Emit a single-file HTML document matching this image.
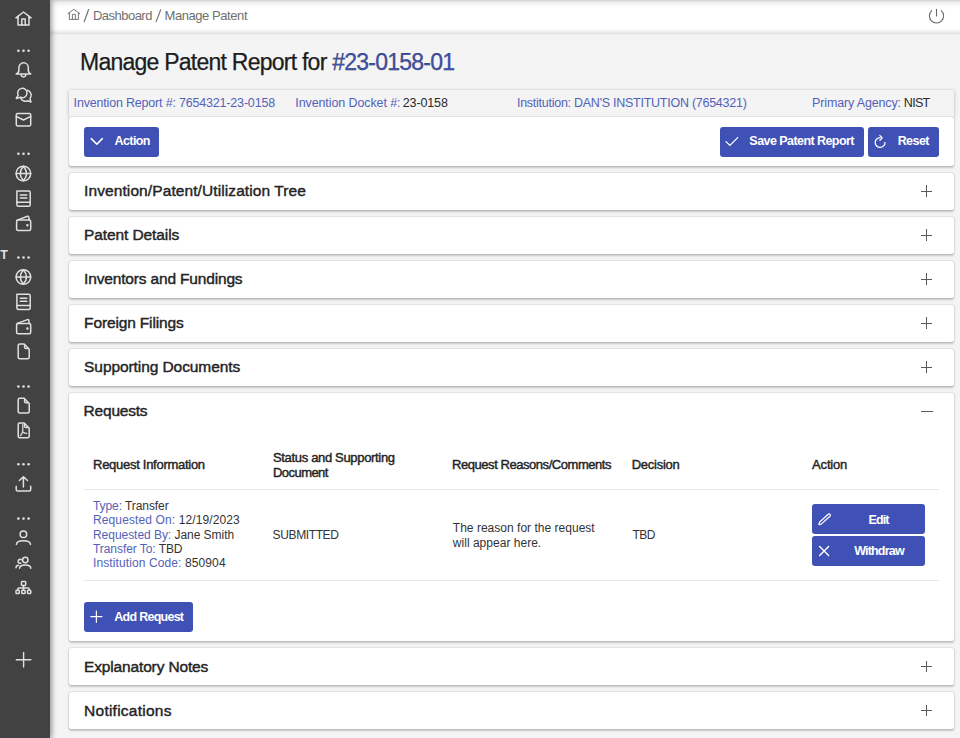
<!DOCTYPE html>
<html><head><meta charset="utf-8">
<style>
*{box-sizing:border-box;margin:0;padding:0}
html,body{width:960px;height:738px;overflow:hidden}
body{background:#f4f4f4;font-family:"Liberation Sans",sans-serif;color:#212121;position:relative}
.side{position:absolute;left:0;top:0;width:50px;height:738px;background:#424242;box-shadow:2px 0 5px rgba(0,0,0,.38);z-index:5}
.sideicons{position:absolute;left:0;top:0}
.hdr{position:absolute;left:50px;top:0;width:910px;height:35px;background:linear-gradient(to bottom,#fff 0,#fff 27.5px,#fafafa 30px,#e2e2e2 33.3px,#f4f4f4 35px)}
.info{position:absolute;left:68.5px;top:89.8px;width:885.7px;height:27px;background:#f4f4f4;box-shadow:0 0 0 0.5px rgba(0,0,0,.06),0 1px 4px rgba(0,0,0,.2)}
.card{position:absolute;left:68.5px;width:885.5px;background:#fff;border-radius:2px;box-shadow:0 0 1.5px rgba(0,0,0,.32),0 1.5px 2px rgba(0,0,0,.18)}
.btn{position:absolute;background:#3f51b5;border-radius:3px}
.t{position:absolute;line-height:1;white-space:nowrap}
.plus{position:absolute;width:12px;height:12px}
.plus:before,.plus:after{content:"";position:absolute;background:#5a5a5a}
.plus:before{left:5.3px;top:0;width:1px;height:11.5px}
.plus:after{left:0;top:5.7px;width:11.5px;height:1px}
.minus{position:absolute;width:12px;height:1.1px;background:#5a5a5a}
.hr{position:absolute;left:84px;width:854.5px;height:1px;background:#e8e8e8}
.ov{position:absolute;left:0;top:0}
.topg{position:absolute;left:50px;top:0;width:910px;height:8px;background:linear-gradient(rgba(0,0,0,.19) 0,rgba(0,0,0,.1) 1.5px,rgba(0,0,0,.04) 4px,rgba(0,0,0,.01) 6.5px,rgba(0,0,0,0) 8px)}
</style></head><body>
<div class="hdr"></div><div class="topg"></div>
<div class="info"></div>
<div class="card" style="top:116.5px;height:49px"></div>
<div class="card" style="top:172.5px;height:37px"></div>
<div class="plus" style="left:920.5px;top:185.0px"></div>
<div class="card" style="top:216.5px;height:37px"></div>
<div class="plus" style="left:920.5px;top:229.0px"></div>
<div class="card" style="top:260.5px;height:37px"></div>
<div class="plus" style="left:920.5px;top:273.0px"></div>
<div class="card" style="top:304.5px;height:37px"></div>
<div class="plus" style="left:920.5px;top:317.0px"></div>
<div class="card" style="top:348.5px;height:37px"></div>
<div class="plus" style="left:920.5px;top:361.0px"></div>
<div class="card" style="top:648px;height:37px"></div>
<div class="plus" style="left:920.5px;top:660.5px"></div>
<div class="card" style="top:692px;height:37px"></div>
<div class="plus" style="left:920.5px;top:704.5px"></div>
<div class="card" style="top:393px;height:247.5px"></div>
<div class="minus" style="left:920.5px;top:410.6px"></div>
<div class="hr" style="top:489px"></div>
<div class="hr" style="top:580px"></div>
<div class="btn" style="left:84px;top:126.8px;width:75px;height:29.799999999999997px"></div>
<div class="btn" style="left:720px;top:126.8px;width:143.79999999999995px;height:29.799999999999997px"></div>
<div class="btn" style="left:868px;top:126.8px;width:70.60000000000002px;height:29.799999999999997px"></div>
<div class="btn" style="left:812px;top:503.75px;width:113px;height:29.850000000000023px"></div>
<div class="btn" style="left:812px;top:535.8px;width:113px;height:29.90000000000009px"></div>
<div class="btn" style="left:84px;top:601.8px;width:109px;height:29.90000000000009px"></div>
<div class="t" style="left:92.99px;top:8.90px;font-size:13px;color:#707070;letter-spacing:-0.524px;">Dashboard</div>
<div class="t" style="left:164.53px;top:8.90px;font-size:13px;color:#707070;letter-spacing:-0.433px;">Manage Patent</div>
<div class="t" style="left:80.00px;top:50.73px;font-size:23px;color:#1c1c1c;letter-spacing:-0.755px;-webkit-text-stroke:0.25px #1c1c1c;">Manage Patent Report for <span style="color:#3f51b5">#23-0158-01</span></div>
<div class="t" style="left:73.61px;top:96.67px;font-size:12.5px;color:#5362b9;letter-spacing:-0.185px;">Invention Report #: 7654321-23-0158</div>
<div class="t" style="left:295.26px;top:96.67px;font-size:12.5px;color:#5362b9;letter-spacing:-0.096px;">Invention Docket #:</div>
<div class="t" style="left:402.78px;top:96.67px;font-size:12.5px;color:#2a2a2a;letter-spacing:-0.127px;">23-0158</div>
<div class="t" style="left:516.94px;top:96.67px;font-size:12.5px;color:#5362b9;letter-spacing:-0.259px;">Institution: DAN'S INSTITUTION (7654321)</div>
<div class="t" style="left:812.12px;top:96.67px;font-size:12.5px;color:#5362b9;letter-spacing:-0.149px;">Primary Agency:</div>
<div class="t" style="left:903.77px;top:96.67px;font-size:12.5px;color:#2a2a2a;letter-spacing:-0.665px;">NIST</div>
<div class="t" style="left:114.52px;top:135.22px;font-size:12.5px;color:#fff;letter-spacing:-0.593px;font-weight:bold;">Action</div>
<div class="t" style="left:749.37px;top:135.22px;font-size:12.5px;color:#fff;letter-spacing:-0.558px;font-weight:bold;">Save Patent Report</div>
<div class="t" style="left:897.66px;top:135.22px;font-size:12.5px;color:#fff;letter-spacing:-0.570px;font-weight:bold;">Reset</div>
<div class="t" style="left:84.09px;top:183.48px;font-size:15.5px;color:#242424;letter-spacing:0.094px;-webkit-text-stroke:0.42px #242424;">Invention/Patent/Utilization Tree</div>
<div class="t" style="left:84.09px;top:227.48px;font-size:15.5px;color:#242424;letter-spacing:-0.100px;-webkit-text-stroke:0.42px #242424;">Patent Details</div>
<div class="t" style="left:84.09px;top:271.48px;font-size:15.5px;color:#242424;letter-spacing:-0.165px;-webkit-text-stroke:0.42px #242424;">Inventors and Fundings</div>
<div class="t" style="left:84.09px;top:315.48px;font-size:15.5px;color:#242424;letter-spacing:-0.143px;-webkit-text-stroke:0.42px #242424;">Foreign Filings</div>
<div class="t" style="left:84.09px;top:359.48px;font-size:15.5px;color:#242424;letter-spacing:-0.080px;-webkit-text-stroke:0.42px #242424;">Supporting Documents</div>
<div class="t" style="left:84.09px;top:659.38px;font-size:15.5px;color:#242424;letter-spacing:-0.155px;-webkit-text-stroke:0.42px #242424;">Explanatory Notes</div>
<div class="t" style="left:84.09px;top:703.38px;font-size:15.5px;color:#242424;letter-spacing:0.243px;-webkit-text-stroke:0.42px #242424;">Notifications</div>
<div class="t" style="left:83.61px;top:403.48px;font-size:15.5px;color:#242424;letter-spacing:-0.214px;-webkit-text-stroke:0.42px #242424;">Requests</div>
<div class="t" style="left:93.03px;top:458.20px;font-size:13px;color:#242424;letter-spacing:-0.277px;-webkit-text-stroke:0.42px #242424;">Request Information</div>
<div class="t" style="left:272.99px;top:450.50px;font-size:13px;color:#242424;letter-spacing:-0.330px;-webkit-text-stroke:0.42px #242424;">Status and Supporting</div>
<div class="t" style="left:272.99px;top:466.00px;font-size:13px;color:#242424;letter-spacing:-0.550px;-webkit-text-stroke:0.42px #242424;">Document</div>
<div class="t" style="left:452.02px;top:458.20px;font-size:13px;color:#242424;letter-spacing:-0.448px;-webkit-text-stroke:0.42px #242424;">Request Reasons/Comments</div>
<div class="t" style="left:631.69px;top:458.20px;font-size:13px;color:#242424;letter-spacing:-0.262px;-webkit-text-stroke:0.42px #242424;">Decision</div>
<div class="t" style="left:812.12px;top:458.20px;font-size:13px;color:#242424;letter-spacing:-0.194px;-webkit-text-stroke:0.42px #242424;">Action</div>
<div class="t" style="left:92.99px;top:499.64px;font-size:12px;color:#333333;letter-spacing:-0.079px;"><span style="color:#5362b9">Type:</span> Transfer</div>
<div class="t" style="left:92.99px;top:514.14px;font-size:12px;color:#333333;letter-spacing:0.115px;"><span style="color:#5362b9">Requested On:</span> 12/19/2023</div>
<div class="t" style="left:92.99px;top:528.54px;font-size:12px;color:#333333;letter-spacing:-0.041px;"><span style="color:#5362b9">Requested By:</span> Jane Smith</div>
<div class="t" style="left:92.99px;top:543.04px;font-size:12px;color:#333333;letter-spacing:-0.064px;"><span style="color:#5362b9">Transfer To:</span> TBD</div>
<div class="t" style="left:92.99px;top:557.14px;font-size:12px;color:#333333;letter-spacing:0.107px;"><span style="color:#5362b9">Institution Code:</span> 850904</div>
<div class="t" style="left:272.59px;top:528.84px;font-size:12px;color:#333333;letter-spacing:-0.375px;">SUBMITTED</div>
<div class="t" style="left:452.83px;top:522.04px;font-size:12px;color:#333333;letter-spacing:0.017px;">The reason for the request</div>
<div class="t" style="left:452.83px;top:537.04px;font-size:12px;color:#333333;letter-spacing:0.020px;">will appear here.</div>
<div class="t" style="left:632.58px;top:528.94px;font-size:12px;color:#333333;letter-spacing:-0.642px;">TBD</div>
<div class="t" style="left:868.60px;top:513.92px;font-size:12.5px;color:#fff;letter-spacing:-0.970px;font-weight:bold;">Edit</div>
<div class="t" style="left:854.17px;top:545.22px;font-size:12.5px;color:#fff;letter-spacing:-0.812px;font-weight:bold;">Withdraw</div>
<div class="t" style="left:114.34px;top:611.42px;font-size:12.5px;color:#fff;letter-spacing:-0.740px;font-weight:bold;">Add Request</div>
<svg class="ov" width="960" height="738" viewBox="0 0 960 738">
<g fill="none" stroke="#777" stroke-width="1.0" stroke-linecap="round" stroke-linejoin="round">
<path d="M69.4 13.6 H67.9 L73.9 9.3 L79.8 13.6 H78.4 M69.4 13 V19.4 H78.4 V13 M72.4 19.4 V14.3 H75.4 V19.4"/>
<path d="M88.6 9.5 L84.2 21.8 M160.7 9.8 L156.1 21.6" stroke="#707070" stroke-width="1.15"/>
</g>
<g fill="none" stroke="#666" stroke-width="1.1" stroke-linecap="round">
<path d="M931.7 10.6 A7.1 7.1 0 1 0 941.3 10.6 M936.5 9.3 V16"/>
</g>
<g fill="none" stroke="#fff" stroke-width="1.6" stroke-linecap="round" stroke-linejoin="round">
<path d="M91.3 138.6 L96.8 144.2 L102.3 138.6"/>
<path d="M726 141.6 L729.9 145.4 L737.7 137.6" stroke-width="1.3"/>
<path d="M880.2 137.6 A4.9 4.9 0 1 0 885 142.4" stroke-width="1.25"/><path d="M879.8 135.4 L882.3 137.9 L879.9 140.3" stroke-width="1.25"/>
<path d="M818.9 524.6 L819.5 522.2 L828.2 514.3 A1.3 1.3 0 0 1 830 516.2 L821.2 524.1 Z" stroke-width="1.2"/>
<path d="M819.6 546.4 L828.6 555.4 M828.6 546.4 L819.6 555.4" stroke-width="1.4"/>
<path d="M96.4 611 V622.3 M90.8 616.6 H102" stroke-width="1.2"/>
</g>
</svg>
<div class="side">
<svg class="sideicons" width="50" height="738" viewBox="0 0 50 738">
<g fill="none" stroke="#e0e0e0" stroke-width="1.5" stroke-linecap="round" stroke-linejoin="round">
<path d="M18 17.8 H15.9 L23.5 12 L31.1 17.8 H29"/><path d="M18 16.6 V25 H29 V16.6"/><path d="M21.8 25 V18.9 H25.2 V25"/>
<path d="M16.2 74 H30.8 Q28.3 73.2 28.3 70 V67.5 A4.7 4.7 0 0 0 18.9 67.5 V70 Q18.9 73.2 16.2 74 Z"/><path d="M21.2 74.6 A2.3 2.3 0 0 0 25.8 74.6"/>
<path d="M16.3 98.4 L18.2 95.2 A4.7 4.7 0 1 1 20.5 97.3 Z"/><path d="M27.3 90.2 A5.2 5.2 0 0 1 30 98.6 L31 102 L27.6 100.8 A5.2 5.2 0 0 1 21 98.6"/>
<rect x="16.3" y="113.5" width="14.4" height="12.4" rx="1.3"/><path d="M16.3 116.3 L23.5 120 L30.7 116.3"/>
<circle cx="23.4" cy="173.5" r="7.3"/><path d="M23.4 166.2 Q17.2 173.5 23.4 180.8 Q29.6 173.5 23.4 166.2"/><path d="M16.1 173.5 H30.7"/><circle cx="23.4" cy="277" r="7.3"/><path d="M23.4 269.7 Q17.2 277 23.4 284.3 Q29.6 277 23.4 269.7"/><path d="M16.1 277 H30.7"/>
<path d="M16.9 191.0 H28.7 Q30.2 191.0 30.2 192.5 V204.7 Q30.2 206.2 28.7 206.2 H18.4 Q16.9 206.2 16.9 204.7 Z"/><path d="M20.3 195.0 H26.8 M20.3 198.1 H26.8 M16.9 202.3 H30.2"/><path d="M16.9 294.2 H28.7 Q30.2 294.2 30.2 295.7 V307.9 Q30.2 309.4 28.7 309.4 H18.4 Q16.9 309.4 16.9 307.9 Z"/><path d="M20.3 298.2 H26.8 M20.3 301.3 H26.8 M16.9 305.5 H30.2"/>
<path d="M18.1 220.1 H29.2 Q30.7 220.1 30.7 221.6 V229.0 Q30.7 230.5 29.2 230.5 H18.1 Q16.6 230.5 16.6 229.0 V221.6 Q16.6 220.1 18.1 220.1 Z"/><path d="M17.2 220.1 L27.5 216.3 Q28.6 216.0 28.8 217.1 L29.1 220.1"/><circle cx="27.4" cy="225.2" r="0.5" fill="#e0e0e0"/><path d="M18.1 323.4 H29.2 Q30.7 323.4 30.7 324.9 V332.3 Q30.7 333.8 29.2 333.8 H18.1 Q16.6 333.8 16.6 332.3 V324.9 Q16.6 323.4 18.1 323.4 Z"/><path d="M17.2 323.4 L27.5 319.6 Q28.6 319.3 28.8 320.4 L29.1 323.4"/><circle cx="27.4" cy="328.5" r="0.5" fill="#e0e0e0"/>
<path d="M19.7 344.0 H24.2 L29.2 349.2 V357.2 Q29.2 358.7 27.7 358.7 H19.7 Q18.2 358.7 18.2 357.2 V345.5 Q18.2 344.0 19.7 344.0 Z"/><path d="M24.6 345.3 V347.3 Q24.6 348.6 25.9 348.6 H28"/><path d="M19.7 398.2 H24.2 L29.2 403.4 V411.4 Q29.2 412.9 27.7 412.9 H19.7 Q18.2 412.9 18.2 411.4 V399.7 Q18.2 398.2 19.7 398.2 Z"/><path d="M24.6 399.5 V401.5 Q24.6 402.8 25.9 402.8 H28"/><path d="M19.7 423.0 H24.2 L29.2 428.2 V436.2 Q29.2 437.7 27.7 437.7 H19.7 Q18.2 437.7 18.2 436.2 V424.5 Q18.2 423.0 19.7 423.0 Z"/><path d="M24.6 424.3 V426.3 Q24.6 427.6 25.9 427.6 H28"/>
<path d="M20.4 435.6 Q22.6 433.6 22.8 430.5 V424.4 M22.9 431.9 Q24.8 433.3 26.8 433.4" stroke-width="1.2"/>
<path d="M19.4 480.5 L23.4 476.7 L27.5 480.5 M23.4 477 V487 M16.2 486.3 V489.5 Q16.2 491 17.7 491 H29.2 Q30.7 491 30.7 489.5 V486.3"/>
<circle cx="23.4" cy="534.3" r="3.3"/><path d="M16.4 544.5 C16.4 542 19 540.7 23.4 540.7 C27.8 540.7 30.5 542 30.5 544.5"/>
<circle cx="25.3" cy="560" r="2.7"/><path d="M19.6 568.3 C19.6 566 21.5 565 25.3 565 C29 565 30.8 566 30.8 568.3"/><path d="M21.3 559.7 A2 2 0 1 0 20.8 563.2"/><path d="M16 567.8 C16 566.2 17 565.5 18.6 565.3"/>
<rect x="21.4" y="581.4" width="4.3" height="4" rx="0.8"/><path d="M23.5 585.4 V590.3 M17.7 590.3 V589.3 Q17.7 588.1 18.9 588.1 H28 Q29.2 588.1 29.2 589.3 V590.3"/>
<rect x="16" y="590.3" width="3.3" height="3.3" rx="0.8"/><rect x="21.8" y="590.3" width="3.3" height="3.3" rx="0.8"/><rect x="27.5" y="590.3" width="3.3" height="3.3" rx="0.8"/>
<path d="M23.6 652.5 V667 M16.3 659.7 H30.9" stroke-width="1.4"/>
</g>
<g fill="#e0e0e0"><circle cx="18.4" cy="50.7" r="1.3"/><circle cx="23.5" cy="50.7" r="1.3"/><circle cx="28.6" cy="50.7" r="1.3"/><circle cx="18.4" cy="153.7" r="1.3"/><circle cx="23.5" cy="153.7" r="1.3"/><circle cx="28.6" cy="153.7" r="1.3"/><circle cx="18.4" cy="257.5" r="1.3"/><circle cx="23.5" cy="257.5" r="1.3"/><circle cx="28.6" cy="257.5" r="1.3"/><circle cx="18.4" cy="386.5" r="1.3"/><circle cx="23.5" cy="386.5" r="1.3"/><circle cx="28.6" cy="386.5" r="1.3"/><circle cx="18.4" cy="464.2" r="1.3"/><circle cx="23.5" cy="464.2" r="1.3"/><circle cx="28.6" cy="464.2" r="1.3"/><circle cx="18.4" cy="518.6" r="1.3"/><circle cx="23.5" cy="518.6" r="1.3"/><circle cx="28.6" cy="518.6" r="1.3"/></g>
<text x="8" y="259" text-anchor="end" font-family="Liberation Sans" font-weight="bold" font-size="12.5" fill="#e0e0e0">ET</text>
</svg>
</div>
</body></html>
